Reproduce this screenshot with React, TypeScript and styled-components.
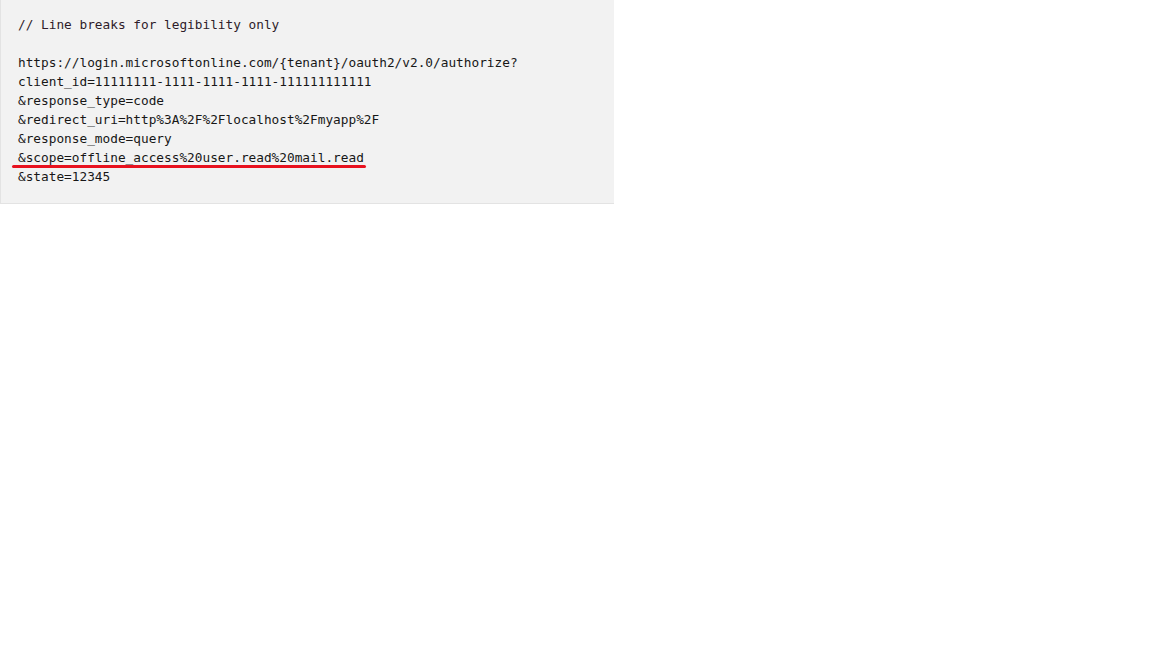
import styled, { createGlobalStyle } from 'styled-components';

const GlobalStyle = createGlobalStyle`
  body {
    margin: 0;
    background: #fff;
  }
`;

const CodeBlock = styled.div`
  box-sizing: border-box;
  width: 614px;
  background-color: #f2f2f2;
  border-left: 1px solid #e3e3e3;
  border-bottom: 1px solid #e3e3e3;
  padding: 15px 16px 17px 17px;
`;

const Code = styled.pre`
  margin: 0;
  font-family: 'DejaVu Sans Mono', 'Liberation Mono', monospace;
  font-size: 12.77px;
  line-height: 19px;
  color: #171717;
  white-space: pre;
`;

const Comment = styled.span`
  color: #2e1c2a;
`;

const Marked = styled.span`
  position: relative;

  &::after {
    content: '';
    position: absolute;
    left: -6px;
    right: -2px;
    bottom: -3px;
    height: 3px;
    border-radius: 2px;
    background: #e8121f;
  }
`;

export default function App() {
  return (
    <>
      <GlobalStyle />
      <CodeBlock>
        <Code>
          <Comment>// Line breaks for legibility only</Comment>
          {'\n\n'}
          {'https://login.microsoftonline.com/{tenant}/oauth2/v2.0/authorize?\n'}
          {'client_id=11111111-1111-1111-1111-111111111111\n'}
          {'&response_type=code\n'}
          {'&redirect_uri=http%3A%2F%2Flocalhost%2Fmyapp%2F\n'}
          {'&response_mode=query\n'}
          <Marked>&amp;scope=offline_access%20user.read%20mail.read</Marked>
          {'\n&state=12345'}
        </Code>
      </CodeBlock>
    </>
  );
}
